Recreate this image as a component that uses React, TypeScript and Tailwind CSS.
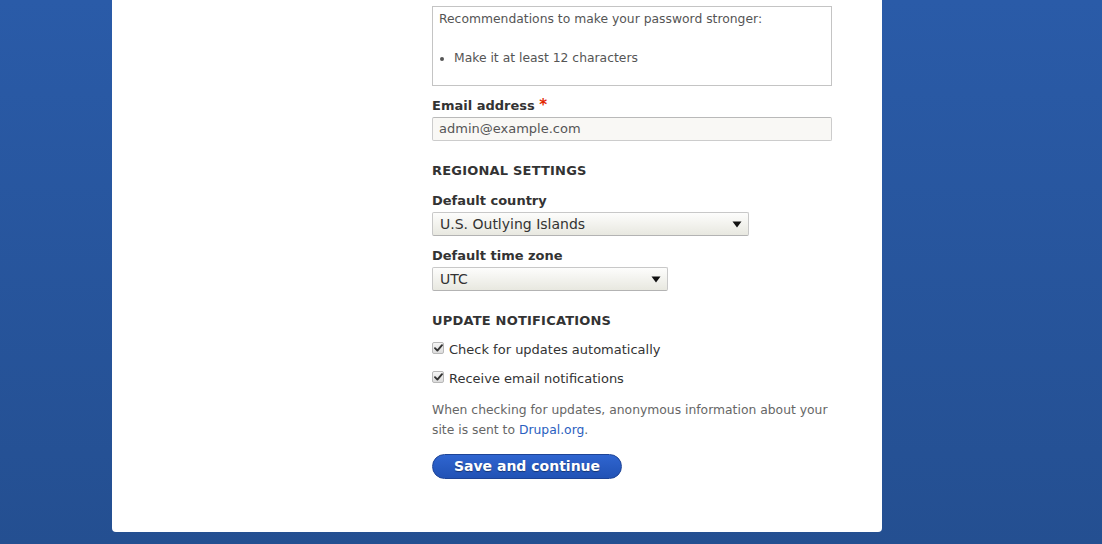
import React from "react";

const font = { fontFamily: '"DejaVu Sans", "Liberation Sans", sans-serif' };

function Arrow() {
  return (
    <svg width="10" height="7" viewBox="0 0 10 7" className="shrink-0">
      <path d="M0.5 0.5 L9.5 0.5 L5 6.5 Z" fill="#111" />
    </svg>
  );
}

function Check() {
  return (
    <span className="mt-[1px] flex h-[12px] w-[12px] shrink-0 items-center justify-center rounded-[2px] border border-[#b8b8b8] bg-gradient-to-b from-[#f6f6f6] to-[#dcdcdc]">
      <svg width="9" height="8" viewBox="0 0 9 8">
        <path d="M1 4.2 L3.4 6.6 L8 1.2" fill="none" stroke="#333" strokeWidth="1.9" strokeLinecap="round" strokeLinejoin="round" />
      </svg>
    </span>
  );
}

export default function App() {
  return (
    <div
      className="min-h-[544px] w-full bg-gradient-to-b from-[#2a5ba8] to-[#244f91] pb-[13px] text-[13px] text-[#333]"
      style={font}
    >
      <div className="ml-[112px] w-[770px] rounded-b-[4px] bg-white pb-[53px] pl-[320px] pt-[6px]">
        <div className="w-[400px]">
          {/* password suggestions */}
          <div className="border border-[#c4c4c4] pb-[17px] pl-[6px] pt-[2px] text-[12.35px] leading-[20px] text-[#555]">
            <p>Recommendations to make your password stronger:</p>
            <ul className="mt-[19px] list-disc pl-[15px]">
              <li>Make it at least 12 characters</li>
            </ul>
          </div>

          {/* email */}
          <div className="mt-[10px] font-bold leading-[18px]">
            Email address <span className="text-[15px] text-[#e32700]">*</span>
          </div>
          <div className="mt-[2px] flex h-[24px] items-center rounded-[2px] border border-[#ccc] border-t-[#b9b9b9] bg-[#f9f8f5] px-[6px] text-[#555]">
            admin@example.com
          </div>

          <h2 className="mt-[21px] font-bold uppercase leading-[18px] tracking-[0.2px]">Regional settings</h2>

          <div className="mt-[12px] font-bold leading-[18px]">Default country</div>
          <div className="mt-[2px] flex h-[24px] w-[317px] items-center justify-between rounded-[2px] border border-[#c8c8c8] border-b-[#b3b3b3] bg-gradient-to-b from-[#fdfdfc] to-[#e8e8e0] pl-[7px] pr-[6px] text-[14px] text-[#333]">
            <span>U.S. Outlying Islands</span>
            <Arrow />
          </div>

          <div className="mt-[11px] font-bold leading-[18px]">Default time zone</div>
          <div className="mt-[2px] flex h-[24px] w-[236px] items-center justify-between rounded-[2px] border border-[#c8c8c8] border-b-[#b3b3b3] bg-gradient-to-b from-[#fdfdfc] to-[#e8e8e0] pl-[7px] pr-[6px] text-[14px] text-[#333]">
            <span>UTC</span>
            <Arrow />
          </div>

          <h2 className="mt-[21px] font-bold uppercase leading-[18px] tracking-[0.2px]">Update notifications</h2>

          <div className="mt-[11px] flex items-start gap-[5px] leading-[18px]">
            <Check />
            <span>Check for updates automatically</span>
          </div>
          <div className="mt-[11px] flex items-start gap-[5px] leading-[18px]">
            <Check />
            <span>Receive email notifications</span>
          </div>

          <p className="mt-[12px] text-[12.35px] leading-[20px] text-[#666]">
            When checking for updates, anonymous information about your site is sent to{" "}
            <a className="text-[#2a60c0]">Drupal.org</a>.
          </p>

          <button className="mt-[14px] flex h-[25px] w-[190px] items-center justify-center rounded-[20px] border border-[#1e4496] bg-gradient-to-b from-[#2f65d0] to-[#2152b5] text-[14px] font-bold text-white [text-shadow:0_1px_1px_rgba(0,0,0,0.4)]">
            Save and continue
          </button>
        </div>
      </div>
    </div>
  );
}
